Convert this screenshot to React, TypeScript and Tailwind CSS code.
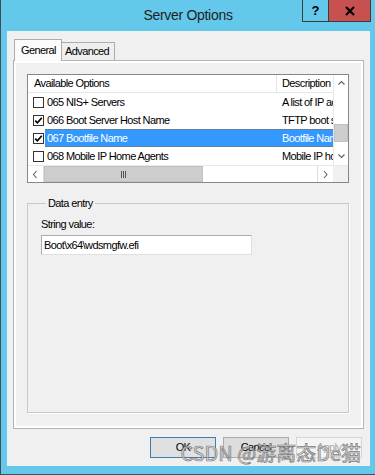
import React from "react";

const options = [
  { checked: false, name: "065 NIS+ Servers", desc: "A list of IP addresses indicating NIS+ servers" },
  { checked: true, name: "066 Boot Server Host Name", desc: "TFTP boot server host name" },
  { checked: true, name: "067 Bootfile Name", desc: "Bootfile Name", selected: true },
  { checked: false, name: "068 Mobile IP Home Agents", desc: "Mobile IP home agents in priority order" },
];

const Chevron: React.FC<{ dir: "up" | "down" | "left" | "right" }> = ({ dir }) => {
  const d = {
    up: "M1.5 5.5 L4.5 2.5 L7.5 5.5",
    down: "M1.5 2.5 L4.5 5.5 L7.5 2.5",
    left: "M5.5 1 L2.5 4.5 L5.5 8",
    right: "M3 1 L6 4.5 L3 8",
  }[dir];
  return (
    <svg width="9" height="9" viewBox="0 0 9 9" fill="none">
      <path d={d} stroke="#606060" strokeWidth="1.1" />
    </svg>
  );
};

const CheckBox: React.FC<{ checked: boolean }> = ({ checked }) => (
  <div className="w-[11px] h-[11px] border border-[#333333] bg-white flex items-center justify-center">
    {checked && (
      <svg width="9" height="9" viewBox="0 0 9 9" fill="none">
        <path d="M1.2 4.6 L3.4 6.8 L7.8 1.8" stroke="#000" strokeWidth="1.7" />
      </svg>
    )}
  </div>
);

const OptionsList: React.FC = () => (
  <div className="h-[109px] border border-[#828790] bg-white flex flex-col">
    <div className="flex flex-1 min-h-0">
      <div className="flex-1 min-w-0 overflow-hidden flex flex-col">
        <div className="h-[18px] flex border-b border-[#e5e5e5] leading-[17px]">
          <div className="w-[249px] shrink-0 pl-[6px] border-r border-[#e5e5e5]">Available Options</div>
          <div className="flex-1 min-w-0 pl-[5px] overflow-hidden whitespace-nowrap">Description</div>
        </div>
        {options.map((o) => (
          <div key={o.name} className="h-[18px] flex items-center">
            <div className="w-[17px] shrink-0 pl-[5px] flex items-center">
              <CheckBox checked={o.checked} />
            </div>
            <div
              className={
                o.selected
                  ? "flex-1 min-w-0 h-[18px] flex items-center bg-[#3399ff] text-white border-y border-dotted border-[#8c6d3f]"
                  : "flex-1 min-w-0 h-[18px] flex items-center"
              }
            >
              <div className="w-[232px] shrink-0 pl-[2px] whitespace-nowrap overflow-hidden">{o.name}</div>
              <div className="flex-1 min-w-0 pl-[5px] whitespace-nowrap overflow-hidden">{o.desc}</div>
            </div>
          </div>
        ))}
      </div>
      <div className="w-[15px] shrink-0 flex flex-col bg-white border-l border-[#e8e8e8]">
        <div className="h-[17px] flex items-center justify-center">
          <Chevron dir="up" />
        </div>
        <div className="flex-1 flex flex-col">
          <div className="h-[32px]" />
          <div className="h-[18px] bg-[#cdcdcd] border border-[#c2c2c2]" />
        </div>
        <div className="h-[17px] flex items-center justify-center">
          <Chevron dir="down" />
        </div>
      </div>
    </div>
    <div className="h-[17px] flex border-t border-[#e8e8e8]">
      <div className="w-[16px] flex items-center justify-center bg-white border-r border-[#dcdcdc]">
        <Chevron dir="left" />
      </div>
      <div className="w-[159px] bg-[#cdcdcd] border border-[#c2c2c2] flex items-center justify-center">
        <svg width="7" height="7" viewBox="0 0 7 7">
          <path d="M1.5 0 V7 M3.5 0 V7 M5.5 0 V7" stroke="#555" strokeWidth="1" />
        </svg>
      </div>
      <div className="flex-1 bg-white" />
      <div className="w-[16px] flex items-center justify-center bg-white border-l border-[#dcdcdc]">
        <Chevron dir="right" />
      </div>
      <div className="w-[15px] bg-[#f0f0f0]" />
    </div>
  </div>
);

const DlgButton: React.FC<{ label: string; kind?: "default" | "disabled" }> = ({ label, kind }) => {
  const cls =
    kind === "default"
      ? "border-[#3c7fb1] bg-[#e0e0e0] text-black"
      : kind === "disabled"
      ? "border-[#d5d5d5] bg-[#f4f4f4] text-[#a8a8a8]"
      : "border-[#acacac] bg-[#dddddd] text-black";
  return (
    <div className={"w-[66px] h-[21px] border flex items-center justify-center " + cls}>{label}</div>
  );
};

const App: React.FC = () => {
  return (
    <div className="w-[375px] h-[475px] bg-[#64c8ea] border-l border-b border-[#3f4f58] flex flex-col relative overflow-hidden font-['Liberation_Sans',Arial,sans-serif] text-[11px] tracking-[-0.6px] text-black">
      <div className="h-[31px] grid grid-cols-[73px_1fr_73px]">
        <div />
        <div className="flex items-center justify-center text-[14px] tracking-[-0.3px] text-[#1e1e1e]">
          Server Options
        </div>
        <div className="flex items-start">
          <div className="h-[22px] flex border-l border-r border-b border-[#3b3b3b]">
            <div className="w-[25px] flex items-center justify-center text-[13px] font-bold tracking-normal">?</div>
            <div className="w-[42px] bg-[#c75050] border-l border-[#3b3b3b] flex items-center justify-center">
              <svg width="12" height="10" viewBox="0 0 12 10">
                <path d="M2 1 L10 9 M10 1 L2 9" stroke="#000" strokeWidth="2.2" />
              </svg>
            </div>
          </div>
        </div>
      </div>

      <div className="ml-[6px] mr-[5px] mb-[8px] flex-1 bg-[#f0f0f0] flex flex-col pt-[8px] px-[6px] pb-[8px]">
        <div className="h-[21px] flex items-end pl-[1px]">
          <div className="h-[22px] -mb-px relative z-10 w-[48px] bg-[#fbfbfb] border-l border-t border-r border-[#acacac] flex items-center pl-[6px] pb-[1px]">
            General
          </div>
          <div className="h-[18px] w-[54px] -ml-px bg-[#eeeeee] border-t border-r border-[#acacac] flex items-center pl-[4px]">
            Advanced
          </div>
        </div>
        <div className="flex-1 border border-[#b4b4b4] shadow-[inset_0_0_0_2px_#ffffff] flex flex-col pt-[13px] pl-[13px] pr-[14px] pb-[15px]">
          <OptionsList />
          <fieldset className="mt-[14px] flex-1 border border-[#c9c9c9] shadow-[1px_1px_0_#ffffff] px-[13px]">
            <legend className="ml-[5px] px-[2px] leading-[13px]">Data entry</legend>
            <div className="mt-[8px] leading-[13px]">String value:</div>
            <div className="mt-[4px] w-[211px] h-[20px] bg-white border border-[#abadb3] border-b-[#dcdfe4] border-r-[#dcdfe4] flex items-center pl-[2px]">
              {"Boot\\x64\\wdsmgfw.efi"}
            </div>
          </fieldset>
        </div>
        <div className="mt-[8px] flex justify-end gap-[7px] pr-[2px]">
          <DlgButton label="OK" kind="default" />
          <DlgButton label="Cancel" />
          <DlgButton label="Apply" kind="disabled" />
        </div>
      </div>

      <div className="absolute right-[14px] bottom-[6px] text-[20px] tracking-normal font-['Noto_Sans_CJK_SC',sans-serif] text-[#d2d2d2]/80 [-webkit-text-stroke:0.7px_#7c7c7c] pointer-events-none">
        CSDN @游离态De猫
      </div>
    </div>
  );
};

export default App;
